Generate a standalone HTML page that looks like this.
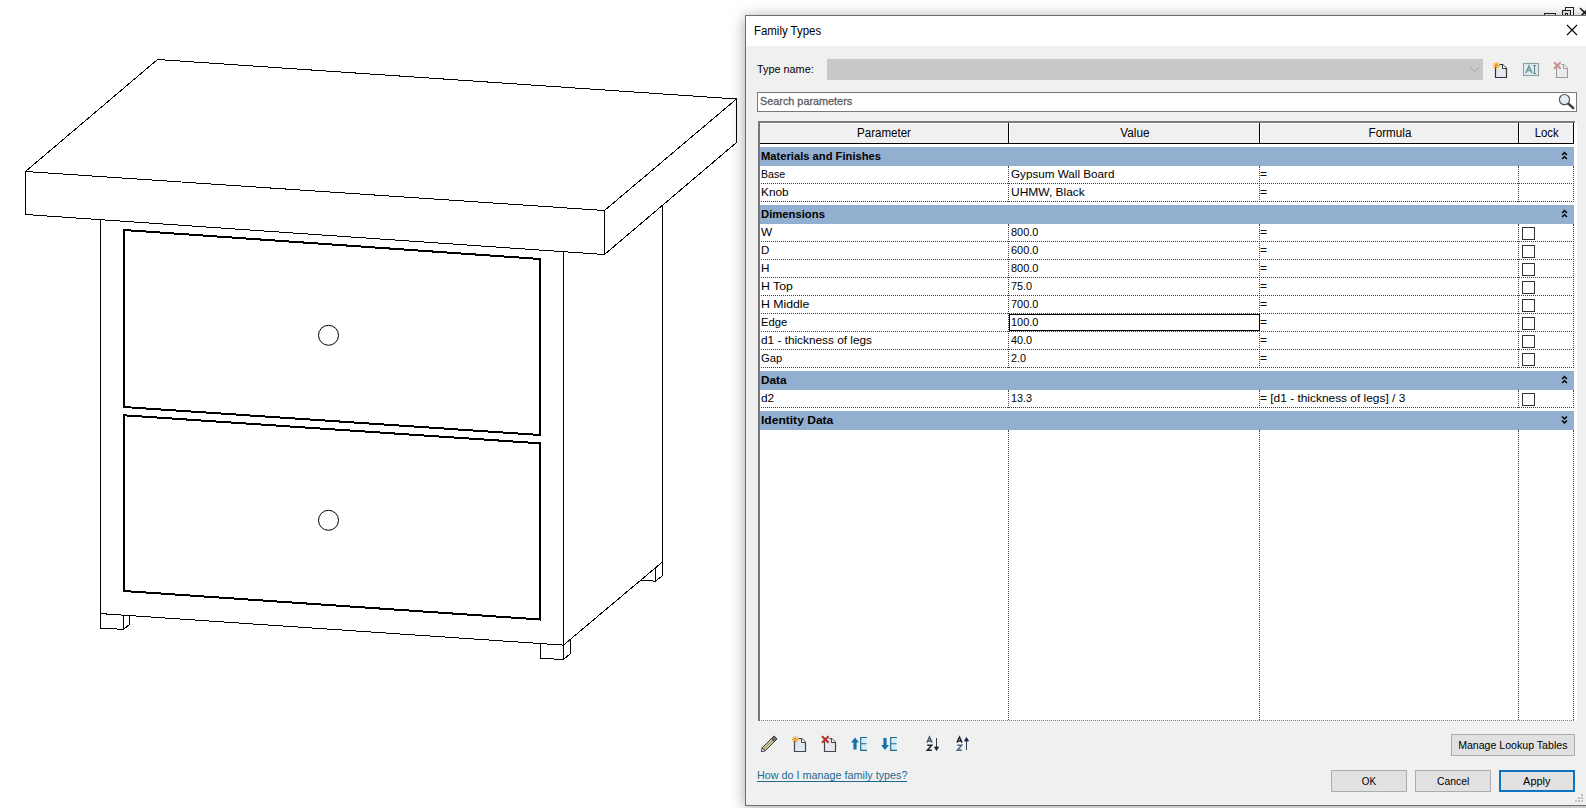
<!DOCTYPE html>
<html>
<head>
<meta charset="utf-8">
<title>Family Types</title>
<style>
html,body{margin:0;padding:0;}
body{width:1586px;height:808px;overflow:hidden;background:#fff;position:relative;font-family:"Liberation Sans",sans-serif;font-size:12px;color:#000;}
.abs{position:absolute;}
#draw{position:absolute;left:0;top:0;width:760px;height:808px;}
#wc{position:absolute;left:1540px;top:0;width:46px;height:16px;}
#dlg{position:absolute;left:745px;top:15px;width:900px;height:791px;background:#f0f0f0;border:1px solid #6e6e6e;box-sizing:border-box;box-shadow:0 2px 14px 0 rgba(0,0,0,0.36);}
#title{position:absolute;left:0;top:0;width:100%;height:30px;background:#fff;}
.t{position:absolute;white-space:nowrap;line-height:14px;height:14px;}
#combo{position:absolute;left:81px;top:43px;width:656px;height:20.500px;background:#c8c8c8;}
#search{position:absolute;left:11px;top:76px;width:820px;height:20px;box-sizing:border-box;border:1px solid #7a7a7a;background:#fff;}
#grid{position:absolute;left:12px;top:106px;width:819px;height:599px;background:#fff;}
#gb{position:absolute;left:11.500px;top:105px;width:817px;height:600px;box-sizing:border-box;border-top:2px solid #7c7c7c;border-left:2px solid #777;pointer-events:none;}
.hd{position:absolute;top:1px;height:21px;box-sizing:border-box;background:#f0f0f0;border-right:1px solid #000;border-bottom:1px solid #000;text-align:center;line-height:20px;padding-left:2px;box-shadow:inset 1px 1px 0 #fff;}
.sec .c{top:0.800px;}
.sec{position:absolute;left:1px;width:815px;height:18.400px;background:#93afd0;font-weight:bold;}
.ar{position:absolute;left:802.200px;top:3.600px;}
.sx{display:inline-block;transform-origin:0 50%;white-space:nowrap;}
.sxc{display:inline-block;transform-origin:50% 50%;white-space:nowrap;}
.selbox{position:absolute;width:251.300px;height:17.600px;box-sizing:border-box;border:1.400px solid #000;}
.row{position:absolute;left:1px;width:815px;height:18px;border-bottom:1px dotted #3c3c3c;box-sizing:border-box;}
.c{position:absolute;top:-0.200px;white-space:nowrap;line-height:17px;height:17px;}
.vl{position:absolute;width:0;border-left:1px dotted #444;}
.cb{position:absolute;left:763px;top:3px;width:13px;height:13px;box-sizing:border-box;border:1px solid #333;background:#fff;}
.btn{position:absolute;box-sizing:border-box;border:1px solid #adadad;background:#e1e1e1;text-align:center;height:22px;line-height:20px;}
</style>
</head>
<body>
<svg id="draw" viewBox="0 0 760 808" fill="none" stroke="#000" stroke-width="1" shape-rendering="auto">
<g shape-rendering="crispEdges" stroke-width="1">
<!-- top slab -->
<path d="M157.5 59.500 L736.500 99 L604.500 210.500 L25.500 171.500 Z"/>
<path d="M25.500 171.500 L25.500 214.500 L604.500 254.500 L604.500 210.500"/>
<path d="M604.500 254.500 L736.500 142.500 L736.500 99"/>
<!-- body -->
<path d="M100.500 219.500 L100.500 613.600 L563.500 645.100 L563.500 251.500"/>
<path d="M563.500 645.100 L662.500 561.900 L662.500 204.500"/>
<!-- front-left leg -->
<path d="M100.500 613.500 L100.500 628.300 L123.700 629.300 L123.700 615.200"/>
<path d="M123.700 629.300 L129.400 624.500 L129.400 615.600"/>
<!-- front-right leg -->
<path d="M540.400 643.300 L540.400 658.400 L563.500 659.400 L563.500 644.800"/>
<path d="M563.500 659.400 L570.500 653.500 L570.500 639"/>
<!-- back-right leg -->
<path d="M640.800 580.100 L655.300 581.200 L655.300 568"/>
<path d="M655.300 581.200 L662.500 575.700 L662.500 561.900"/>
<!-- knobs -->
</g>
<circle cx="328.500" cy="335.300" r="10" stroke-width="1"/>
<circle cx="328.500" cy="520.300" r="10" stroke-width="1"/>
<g stroke-width="2" stroke-linejoin="miter" shape-rendering="crispEdges">
<path d="M124 230 L540 259 L540 435 L124 407 Z"/>
<path d="M124 415.300 L540 443.300 L540 619.500 L124 591 Z"/>
</g>

</svg>
<svg id="wc" viewBox="0 0 46 16" fill="none" stroke="#222" stroke-width="1">
<rect x="4.5" y="13.5" width="11" height="4"/>
<rect x="25.500" y="7.5" width="8" height="10"/>
<rect x="22.500" y="10.5" width="8" height="8" fill="#eee"/>
<rect x="25.500" y="13.5" width="2" height="4"/>
<path d="M40 8 L47 15 M40 17 L47 10" stroke-width="1.600"/>
</svg>
<div id="dlg">
<div id="title"></div>
<div class="t" style="left:8px;top:8px;"><span class="sx" style="transform:scaleX(0.9524);">Family Types</span></div>
<div class="t" style="left:10.900px;top:46.300px;"><span class="sx" style="transform:scaleX(0.9603);font-size:11.3px;">Type name:</span></div>
<div id="combo"></div>
<div id="search"></div>
<div class="t" style="left:14px;top:78.300px;color:#555;-webkit-text-stroke:0.300px #666;"><span class="sx" style="transform:scaleX(0.9594);font-size:11.3px;">Search parameters</span></div>
<svg class="abs" style="left:820px;top:8px;" width="12" height="12" viewBox="0 0 12 12"><path d="M1 1 L11 11 M11 1 L1 11" stroke="#000" stroke-width="1.1" fill="none"/></svg>
<svg class="abs" style="left:723px;top:50px;" width="11" height="7" viewBox="0 0 11 7"><path d="M1 1.500 L5.500 5.500 L10 1.500" stroke="#b2b2b2" stroke-width="1.200" fill="none"/></svg>
<!-- new type icon -->
<svg class="abs" style="left:744px;top:44px;" width="20" height="20" viewBox="0 0 20 20">
<path d="M5.500 5.500 L5.500 17.500 L16.500 17.500 L16.500 8.500 L12.500 4.500 L9.500 4.500" fill="#e6e8f2" stroke="#333" stroke-width="1.200" stroke-linejoin="round"/>
<path d="M12.500 4.500 L12.500 8.500 L16.500 8.500" fill="#fff" stroke="#333" stroke-width="1"/>
<path d="M6.300 2 V9 M2.800 5.500 H9.800 M3.800 3 L8.800 8 M8.800 3 L3.800 8" stroke="#f0a018" stroke-width="1.050" fill="none"/>
</svg>
<!-- rename icon (disabled) -->
<svg class="abs" style="left:776px;top:46px;" width="18" height="15" viewBox="0 0 18 15">
<rect x="1.500" y="1.500" width="15" height="12" fill="#e4ecee" stroke="#8aa0a4" stroke-width="1.100"/>
<path d="M4 11 L7 4 L10 11 M5 8.500 H9" stroke="#6f9aa2" stroke-width="1.600" fill="none"/>
<path d="M12.500 3.500 V11.500 M11 3.500 H14 M11 11.500 H14" stroke="#5f8a92" stroke-width="1.100" fill="none"/>
</svg>
<!-- delete type icon (disabled) -->
<svg class="abs" style="left:805px;top:44px;" width="20" height="20" viewBox="0 0 20 20">
<path d="M5.500 7.500 L5.500 17.500 L16.500 17.500 L16.500 8.500 L12.500 4.500 L10.500 4.500" fill="#ececf0" stroke="#9a9a9a" stroke-width="1.100" stroke-linejoin="round"/>
<path d="M12.500 4.500 L12.500 8.500 L16.500 8.500" fill="#f4f4f4" stroke="#9aa89a" stroke-width="1"/>
<path d="M3 2.200 L9.600 8.800 M9.600 2.200 L3 8.800" stroke="#cc8f8f" stroke-width="2" fill="none"/>
</svg>
<!-- magnifier -->
<svg class="abs" style="left:811px;top:76px;" width="20" height="20" viewBox="0 0 20 20">
<path d="M11.200 11.600 L16.200 16" stroke="#444" stroke-width="2.600" stroke-linecap="round" fill="none"/>
<circle cx="7.500" cy="7.600" r="5.100" fill="#e2eef2" stroke="#555" stroke-width="1.200"/>
</svg>

<div id="grid">
<div class="hd" style="left:1px;width:250px;"><span class="sxc" style="transform:scaleX(0.9601);">Parameter</span></div>
<div class="hd" style="left:251px;width:251px;"><span class="sxc" style="transform:scaleX(0.9834);">Value</span></div>
<div class="hd" style="left:502px;width:259px;"><span class="sxc" style="transform:scaleX(0.9731);">Formula</span></div>
<div class="hd" style="left:761px;width:55px;"><span class="sxc" style="transform:scaleX(0.9463);">Lock</span></div>
<div class="sec" style="top:25.2px;"><span class="c" style="left:2.300px;"><span class="sx" style="transform:scaleX(0.9729);font-size:11.5px;">Materials and Finishes</span></span><svg class="ar" viewBox="0 0 7 9" width="7" height="9"><path d="M1.100 4 L3.500 1.500 L5.900 4 M1.100 8 L3.500 5.500 L5.900 8" fill="none" stroke="#000" stroke-width="1.500"/></svg></div>
<div class="row" style="top:44px;"><span class="c" style="left:2.300px;"><span class="sx" style="transform:scaleX(0.9216);font-size:11.5px;">Base</span></span><span class="c" style="left:252px;"><span class="sx" style="transform:scaleX(1.0154);font-size:11.5px;">Gypsum Wall Board</span></span><span class="c" style="left:501.3px;"><span class="sx" style="transform:scaleX(1.0423);font-size:11.5px;">=</span></span></div>
<div class="row" style="top:62px;"><span class="c" style="left:2.300px;"><span class="sx" style="transform:scaleX(1.0277);font-size:11.5px;">Knob</span></span><span class="c" style="left:252px;"><span class="sx" style="transform:scaleX(1.0406);font-size:11.5px;">UHMW, Black</span></span><span class="c" style="left:501.3px;"><span class="sx" style="transform:scaleX(1.0423);font-size:11.5px;">=</span></span></div>
<div class="sec" style="top:83.2px;"><span class="c" style="left:2.300px;"><span class="sx" style="transform:scaleX(0.9803);font-size:11.5px;">Dimensions</span></span><svg class="ar" viewBox="0 0 7 9" width="7" height="9"><path d="M1.100 4 L3.500 1.500 L5.900 4 M1.100 8 L3.500 5.500 L5.900 8" fill="none" stroke="#000" stroke-width="1.500"/></svg></div>
<div class="row" style="top:102px;"><span class="c" style="left:2.300px;"><span class="sx" style="transform:scaleX(1.0266);font-size:11.5px;">W</span></span><span class="c" style="left:252px;"><span class="sx" style="transform:scaleX(0.9509);font-size:11.5px;">800.0</span></span><span class="c" style="left:501.3px;"><span class="sx" style="transform:scaleX(1.0423);font-size:11.5px;">=</span></span><span class="cb"></span></div>
<div class="row" style="top:120px;"><span class="c" style="left:2.300px;"><span class="sx" style="transform:scaleX(1.0050);font-size:11.5px;">D</span></span><span class="c" style="left:252px;"><span class="sx" style="transform:scaleX(0.9509);font-size:11.5px;">600.0</span></span><span class="c" style="left:501.3px;"><span class="sx" style="transform:scaleX(1.0423);font-size:11.5px;">=</span></span><span class="cb"></span></div>
<div class="row" style="top:138px;"><span class="c" style="left:2.300px;"><span class="sx" style="transform:scaleX(1.0176);font-size:11.5px;">H</span></span><span class="c" style="left:252px;"><span class="sx" style="transform:scaleX(0.9509);font-size:11.5px;">800.0</span></span><span class="c" style="left:501.3px;"><span class="sx" style="transform:scaleX(1.0423);font-size:11.5px;">=</span></span><span class="cb"></span></div>
<div class="row" style="top:156px;"><span class="c" style="left:2.300px;"><span class="sx" style="transform:scaleX(1.0700);font-size:11.5px;">H Top</span></span><span class="c" style="left:252px;"><span class="sx" style="transform:scaleX(0.9458);font-size:11.5px;">75.0</span></span><span class="c" style="left:501.3px;"><span class="sx" style="transform:scaleX(1.0423);font-size:11.5px;">=</span></span><span class="cb"></span></div>
<div class="row" style="top:174px;"><span class="c" style="left:2.300px;"><span class="sx" style="transform:scaleX(1.0663);font-size:11.5px;">H Middle</span></span><span class="c" style="left:252px;"><span class="sx" style="transform:scaleX(0.9509);font-size:11.5px;">700.0</span></span><span class="c" style="left:501.3px;"><span class="sx" style="transform:scaleX(1.0423);font-size:11.5px;">=</span></span><span class="cb"></span></div>
<div class="row" style="top:192px;"><span class="c" style="left:2.300px;"><span class="sx" style="transform:scaleX(0.9771);font-size:11.5px;">Edge</span></span><span class="c" style="left:252px;"><span class="sx" style="transform:scaleX(0.9509);font-size:11.5px;">100.0</span></span><span class="c" style="left:501.3px;"><span class="sx" style="transform:scaleX(1.0423);font-size:11.5px;">=</span></span><span class="cb"></span></div>
<div class="row" style="top:210px;"><span class="c" style="left:2.300px;"><span class="sx" style="transform:scaleX(1.0272);font-size:11.5px;">d1 - thickness of legs</span></span><span class="c" style="left:252px;"><span class="sx" style="transform:scaleX(0.9458);font-size:11.5px;">40.0</span></span><span class="c" style="left:501.3px;"><span class="sx" style="transform:scaleX(1.0423);font-size:11.5px;">=</span></span><span class="cb"></span></div>
<div class="row" style="top:228px;"><span class="c" style="left:2.300px;"><span class="sx" style="transform:scaleX(0.9763);font-size:11.5px;">Gap</span></span><span class="c" style="left:252px;"><span class="sx" style="transform:scaleX(0.9366);font-size:11.5px;">2.0</span></span><span class="c" style="left:501.3px;"><span class="sx" style="transform:scaleX(1.0423);font-size:11.5px;">=</span></span><span class="cb"></span></div>
<div class="sec" style="top:249.2px;"><span class="c" style="left:2.300px;"><span class="sx" style="transform:scaleX(1.0230);font-size:11.5px;">Data</span></span><svg class="ar" viewBox="0 0 7 9" width="7" height="9"><path d="M1.100 4 L3.500 1.500 L5.900 4 M1.100 8 L3.500 5.500 L5.900 8" fill="none" stroke="#000" stroke-width="1.500"/></svg></div>
<div class="row" style="top:268px;"><span class="c" style="left:2.300px;"><span class="sx" style="transform:scaleX(1.0315);font-size:11.5px;">d2</span></span><span class="c" style="left:252px;"><span class="sx" style="transform:scaleX(0.9458);font-size:11.5px;">13.3</span></span><span class="c" style="left:501.3px;"><span class="sx" style="transform:scaleX(1.0355);font-size:11.5px;">= [d1 - thickness of legs] / 3</span></span><span class="cb"></span></div>
<div class="sec" style="top:289.2px;"><span class="c" style="left:2.300px;"><span class="sx" style="transform:scaleX(1.0476);font-size:11.5px;">Identity Data</span></span><svg class="ar" viewBox="0 0 7 9" width="7" height="9"><path d="M1.100 1.500 L3.500 4 L5.900 1.500 M1.100 5.500 L3.500 8 L5.900 5.500" fill="none" stroke="#000" stroke-width="1.500"/></svg></div>
<div class="vl" style="left:250px;top:44px;height:36px;"></div>
<div class="vl" style="left:501px;top:44px;height:36px;"></div>
<div class="vl" style="left:760px;top:44px;height:36px;"></div>
<div class="vl" style="left:815px;top:44px;height:36px;"></div>
<div class="vl" style="left:250px;top:102px;height:144px;"></div>
<div class="vl" style="left:501px;top:102px;height:144px;"></div>
<div class="vl" style="left:760px;top:102px;height:144px;"></div>
<div class="vl" style="left:815px;top:102px;height:144px;"></div>
<div class="vl" style="left:250px;top:268px;height:18px;"></div>
<div class="vl" style="left:501px;top:268px;height:18px;"></div>
<div class="vl" style="left:760px;top:268px;height:18px;"></div>
<div class="vl" style="left:815px;top:268px;height:18px;"></div>
<div class="vl" style="left:250px;top:308px;height:290px;"></div>
<div class="vl" style="left:501px;top:308px;height:290px;"></div>
<div class="vl" style="left:760px;top:308px;height:290px;"></div>
<div class="vl" style="left:815px;top:308px;height:290px;"></div>
<div class="row" style="top:581px;border-bottom-color:#777;"></div>
<div class="selbox" style="left:250.70000000000005px;top:191.60000000000002px;"></div>
</div>
<div id="gb"></div>
<!-- pencil -->
<svg class="abs" style="left:13px;top:718px;" width="20" height="20" viewBox="0 0 20 20">
<path d="M3.100 13.900 L12.400 4.600 L15.400 7.600 L6.100 16.900 Z" fill="#cfc79a" stroke="#3a3a3a" stroke-width="1" stroke-linejoin="round"/>
<path d="M12.400 4.600 L15.100 1.900 L18.100 4.900 L15.400 7.600 Z" fill="#6e6e6e" stroke="#3a3a3a" stroke-width="1" stroke-linejoin="round"/>
<path d="M2.300 17.700 L3.100 13.900 L6.100 16.900 Z" fill="#fff" stroke="#3a3a3a" stroke-width="1" stroke-linejoin="round"/>
<path d="M4.600 15.400 L13.900 6.100" stroke="#8f8763" stroke-width="0.800" fill="none"/>
</svg>
<!-- new param -->
<svg class="abs" style="left:43px;top:718px;" width="20" height="20" viewBox="0 0 20 20">
<path d="M5.500 6 L5.500 17.500 L16.500 17.500 L16.500 8.500 L12.500 4.500 L9.500 4.500" fill="#dfe6f4" stroke="#444" stroke-width="1.200" stroke-linejoin="round"/>
<path d="M12.500 4.500 L12.500 8.500 L16.500 8.500" fill="#fff" stroke="#444" stroke-width="1"/>
<path d="M6.300 2 V9 M2.800 5.500 H9.800 M3.800 3 L8.800 8 M8.800 3 L3.800 8" stroke="#f0a018" stroke-width="1.050" fill="none"/>
</svg>
<!-- delete param -->
<svg class="abs" style="left:73px;top:718px;" width="20" height="20" viewBox="0 0 20 20">
<path d="M5.500 7.500 L5.500 17.500 L16.500 17.500 L16.500 8.500 L12.500 4.500 L10.500 4.500" fill="#e6e6ee" stroke="#444" stroke-width="1.200" stroke-linejoin="round"/>
<path d="M12.500 4.500 L12.500 8.500 L16.500 8.500" fill="#fff" stroke="#444" stroke-width="1"/>
<path d="M3 2.200 L9.600 8.800 M9.600 2.200 L3 8.800" stroke="#b83030" stroke-width="2.100" fill="none"/>
</svg>
<!-- move up -->
<svg class="abs" style="left:103px;top:719px;" width="20" height="18" viewBox="0 0 20 18">
<path d="M6 2.500 L10 7.500 L7.600 7.500 L7.600 14.500 L4.400 14.500 L4.400 7.500 L2 7.500 Z" fill="#1670a8"/>
<rect x="11.500" y="2.500" width="6" height="13" fill="#d6ebf6" stroke="none"/>
<path d="M18 2.500 H11.700 V15.300 H18 M11.700 8.700 H17.500" stroke="#1a6c96" stroke-width="1.150" fill="none"/>
</svg>
<!-- move down -->
<svg class="abs" style="left:133px;top:719px;" width="20" height="18" viewBox="0 0 20 18">
<path d="M6 15 L10 10 L7.600 10 L7.600 3 L4.400 3 L4.400 10 L2 10 Z" fill="#1670a8"/>
<rect x="11.500" y="2.500" width="6" height="13" fill="#d6ebf6" stroke="none"/>
<path d="M18 2.500 H11.700 V15.300 H18 M11.700 8.700 H17.500" stroke="#1a6c96" stroke-width="1.150" fill="none"/>
</svg>
<!-- sort asc -->
<svg class="abs" style="left:178px;top:718px;" width="20" height="20" viewBox="0 0 20 20">
<path d="M3 8.600 L5.500 3 L8 8.600 M3.900 6.900 H7.100" stroke="#44566a" stroke-width="1.500" fill="none"/>
<path d="M3.300 11.300 H7.700 L3.300 16.300 H7.900" stroke="#1c2630" stroke-width="1.500" fill="none"/>
<path d="M12.500 4 V16 M10.500 13 L12.500 16.500 L14.500 13 Z" stroke="#1c2630" stroke-width="0.900" fill="#1c2630"/>
</svg>
<!-- sort desc -->
<svg class="abs" style="left:208px;top:718px;" width="20" height="20" viewBox="0 0 20 20">
<path d="M3 8.600 L5.500 3 L8 8.600 M3.900 6.900 H7.100" stroke="#1c2838" stroke-width="1.500" fill="none"/>
<path d="M3.300 11.300 H7.700 L3.300 16.300 H7.900" stroke="#4e6482" stroke-width="1.500" fill="none"/>
<path d="M12.500 4 V16 M10.500 7 L12.500 3.500 L14.500 7 Z" stroke="#1c2848" stroke-width="0.900" fill="#1c2848"/>
</svg>
<div class="t" id="lnk" style="left:11px;top:753.300px;color:#256a90;font-size:11px;border-bottom:1px solid #256a90;height:11.400px;line-height:13px;width:149.500px;"><span class="sx" style="transform:scaleX(0.9807);font-size:11px;">How do I manage family types?</span></div>
<div class="btn" style="left:705px;top:718px;width:124px;"><span class="sxc" style="transform:scaleX(0.9625);font-size:11px;">Manage Lookup Tables</span></div>
<div class="btn" style="left:585px;top:754px;width:76px;"><span class="sxc" style="transform:scaleX(0.8935);font-size:11px;">OK</span></div>
<div class="btn" style="left:669px;top:754px;width:76px;"><span class="sxc" style="transform:scaleX(0.9462);font-size:11px;">Cancel</span></div>
<div class="btn" style="left:753px;top:754px;width:76px;border:2px solid #0f74c2;line-height:18px;"><span class="sxc" style="transform:scaleX(0.9921);font-size:11px;">Apply</span></div>
<svg class="abs" style="left:826px;top:775px;" width="14" height="14" viewBox="0 0 14 14" fill="#c0c0c0"><rect x="9" y="9" width="2" height="2"/><rect x="6" y="9" width="2" height="2"/><rect x="9" y="6" width="2" height="2"/><rect x="3" y="9" width="2" height="2"/><rect x="6" y="6" width="2" height="2"/><rect x="9" y="3" width="2" height="2"/></svg>

</div>
</body>
</html>
